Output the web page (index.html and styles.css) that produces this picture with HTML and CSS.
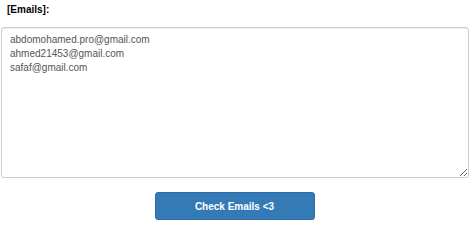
FILE: index.html
```html
<!DOCTYPE html>
<html lang="en">
<head>
    <meta charset="UTF-8">
    <title>Check Emails</title>
    <link rel="stylesheet" href="styles.css">
</head>
<body>
    <div class="form">
        <label class="label" for="emails">[Emails]:</label>
        <textarea class="emails" id="emails">abdomohamed.pro@gmail.com
ahmed21453@gmail.com
safaf@gmail.com</textarea>
        <div class="actions">
            <button class="check-btn">Check Emails &lt;3</button>
        </div>
    </div>
</body>
</html>
```

FILE: styles.css
```css
body {
    margin: 0;
    font-family: "Liberation Sans", Arial, sans-serif;
    font-size: 10px;
    color: #333;
    background: #fff;
}
.form {
    display: flex;
    flex-direction: column;
    padding: 4px 5px 0 1px;
}
.label {
    font-weight: bold;
    color: #000;
    margin-left: 6px;
    line-height: 12px;
    margin-bottom: 11px;
}
.emails {
    display: block;
    width: 100%;
    height: 151px;
    box-sizing: border-box;
    padding: 5px 8px;
    border: 1px solid #ccc;
    border-radius: 3px;
    box-shadow: inset 0 1px 1px rgba(0, 0, 0, 0.075);
    font-family: "Liberation Sans", Arial, sans-serif;
    font-size: 10px;
    line-height: 14px;
    color: #555;
    resize: vertical;
}
.actions {
    display: flex;
    justify-content: center;
    padding-top: 14px;
    padding-right: 1px;
}
.check-btn {
    width: 160px;
    height: 28px;
    background: #337ab7;
    border: 1px solid #2e6da4;
    border-radius: 3px;
    color: #fff;
    font-family: "Liberation Sans", Arial, sans-serif;
    font-size: 10px;
    font-weight: bold;
    cursor: pointer;
}
```
